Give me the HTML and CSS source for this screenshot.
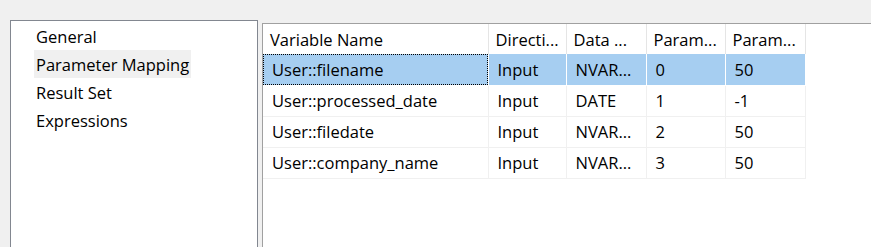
FILE: index.html
```html
<!DOCTYPE html>
<html lang="en">
<head>
    <meta charset="UTF-8">
    <title>Parameter Mapping</title>
    <link rel="stylesheet" href="styles.css">
</head>
<body>
    <div class="editor">
        <!-- Page list on the left -->
        <div class="pages">
            <div class="page">General</div>
            <div class="page active">Parameter Mapping</div>
            <div class="page">Result Set</div>
            <div class="page">Expressions</div>
        </div>

        <!-- Parameter grid -->
        <div class="grid-box">
            <table class="grid">
                <thead>
                    <tr>
                        <th class="c-name">Variable Name</th>
                        <th class="c-dir">Directi...</th>
                        <th class="c-type">Data ...</th>
                        <th class="c-par">Param...</th>
                        <th class="c-size">Param...</th>
                    </tr>
                </thead>
                <tbody>
                    <tr class="selected">
                        <td class="focus">User::filename</td>
                        <td>Input</td>
                        <td>NVAR...</td>
                        <td>0</td>
                        <td>50</td>
                    </tr>
                    <tr>
                        <td>User::processed_date</td>
                        <td>Input</td>
                        <td>DATE</td>
                        <td>1</td>
                        <td>-1</td>
                    </tr>
                    <tr>
                        <td>User::filedate</td>
                        <td>Input</td>
                        <td>NVAR...</td>
                        <td>2</td>
                        <td>50</td>
                    </tr>
                    <tr>
                        <td>User::company_name</td>
                        <td>Input</td>
                        <td>NVAR...</td>
                        <td>3</td>
                        <td>50</td>
                    </tr>
                </tbody>
            </table>
        </div>
    </div>
</body>
</html>
```

FILE: styles.css
```css
* {
    margin: 0;
    padding: 0;
    box-sizing: border-box;
}

body {
    font-family: 'Open Sans', 'Noto Sans', sans-serif;
    font-size: 16.5px;
    color: #000;
    background-color: #f0f0f0;
    height: 100vh;
    overflow: hidden;
}

.editor {
    display: flex;
    height: 100%;
    padding-left: 10px;
}

/* Left page list */
.pages {
    width: 248px;
    margin-top: 20px;
    background-color: #fff;
    border: 1px solid #828790;
    border-bottom: none;
    padding: 1px 0 0 23px;
    display: flex;
    flex-direction: column;
    align-items: flex-start;
}

.page {
    height: 28px;
    line-height: 28px;
    padding: 1px 2px 0;
}

.page.active {
    background-color: #f0f0f0;
}

/* Right grid */
.grid-box {
    flex: 1;
    margin-top: 23px;
    margin-left: 4px;
    background-color: #fff;
    border-top: 1px solid #a0a0a0;
    border-left: 1px solid #a0a0a0;
}

.grid {
    border-collapse: collapse;
    table-layout: fixed;
}

.grid th {
    font-weight: normal;
    text-align: left;
    height: 30px;
    padding: 0 0 0 7px;
    border-right: 1px solid #e5e5e5;
    white-space: nowrap;
    overflow: hidden;
}

.grid td {
    height: 31px;
    padding: 0 0 0 9px;
    border-right: 1px solid #f0f0f0;
    border-bottom: 1px solid #f0f0f0;
    white-space: nowrap;
    overflow: hidden;
}

.c-name { width: 225px; }
.c-dir { width: 78px; }
.c-type { width: 80px; }
.c-par { width: 79px; }
.c-size { width: 80px; }

.grid tr.selected td {
    background-color: #a6cef1;
    border-color: #fff;
}

.grid td.focus {
    outline: 1px dotted #000;
    outline-offset: -1px;
}
```
